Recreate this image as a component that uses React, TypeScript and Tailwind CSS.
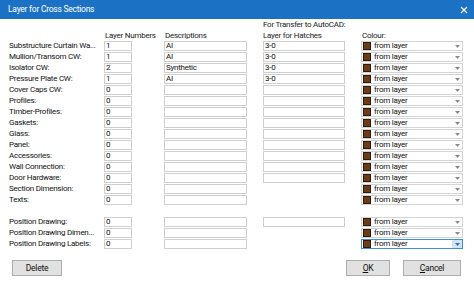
import React from "react";

type Row = {
  label: string;
  num: string;
  desc?: string;
  hatch?: string | null;
};

const rows: Row[] = [
  { label: "Substructure Curtain Wa...", num: "1", desc: "AI", hatch: "3-0" },
  { label: "Mullion/Transom CW:", num: "1", desc: "AI", hatch: "3-0" },
  { label: "Isolator CW:", num: "2", desc: "Synthetic", hatch: "3-0" },
  { label: "Pressure Plate CW:", num: "1", desc: "AI", hatch: "3-0" },
  { label: "Cover Caps CW:", num: "0", hatch: "" },
  { label: "Profiles:", num: "0", hatch: "" },
  { label: "Timber-Profiles:", num: "0", hatch: "" },
  { label: "Gaskets:", num: "0", hatch: "" },
  { label: "Glass:", num: "0", hatch: "" },
  { label: "Panel:", num: "0", hatch: "" },
  { label: "Accessories:", num: "0", hatch: "" },
  { label: "Wall Connection:", num: "0", hatch: "" },
  { label: "Door Hardware:", num: "0", hatch: "" },
  { label: "Section Dimension:", num: "0", hatch: null },
  { label: "Texts:", num: "0", hatch: null },
];

const posRows: Row[] = [
  { label: "Position Drawing:", num: "0", hatch: "" },
  { label: "Position Drawing Dimen...", num: "0", hatch: null },
  { label: "Position Drawing Labels:", num: "0", hatch: null },
];

function Box({ w, value }: { w: string; value?: string }) {
  return (
    <div
      className={`${w} h-[10px] border border-[#cfcfcf] bg-white pl-[1px] leading-[8px] text-[#111] overflow-hidden whitespace-nowrap`}
    >
      {value}
    </div>
  );
}

function ColourSelect({ focused }: { focused?: boolean }) {
  return (
    <div
      className={`ml-[16px] w-[102px] h-[10px] flex items-center border bg-white ${
        focused ? "border-[#3d8ee0]" : "border-[#d4d4d4]"
      }`}
    >
      <div className="ml-[1px] w-[8px] h-[8px] bg-[#6e3b17] border border-[#2e1a0a]" />
      <span className="ml-[3px] flex-1 leading-[8px] text-[#111]">from layer</span>
      <div
        className={`h-full w-[10px] flex items-center justify-center ${
          focused ? "bg-[#cfe4f8]" : ""
        }`}
      >
        <svg width="5" height="3" viewBox="0 0 5 3">
          <path d="M0 0 L5 0 L2.5 3 Z" fill={focused ? "#3f6f9f" : "#8a8a8a"} />
        </svg>
      </div>
    </div>
  );
}

function LayerRow({ row, focused }: { row: Row; focused?: boolean }) {
  return (
    <div className="flex h-[11px] items-start pl-[9px]">
      <div className="w-[95px] leading-[10px] whitespace-nowrap text-[#111]">
        {row.label}
      </div>
      <Box w="w-[28px]" value={row.num} />
      <div className="ml-[32px]">
        <Box w="w-[83px]" value={row.desc} />
      </div>
      <div className="ml-[16px] w-[82px]">
        {row.hatch !== null && row.hatch !== undefined && <Box w="w-[82px]" value={row.hatch} />}
      </div>
      <ColourSelect focused={focused} />
    </div>
  );
}

function Btn({ children, w }: { children: React.ReactNode; w: string }) {
  return (
    <div
      className={`${w} h-[16px] flex items-center justify-center border border-[#adadad] bg-[#e1e1e1] text-[#111]`}
    >
      {children}
    </div>
  );
}

export default function App() {
  return (
    <div
      className="w-[474px] h-[283px] bg-white overflow-hidden text-[8px] tracking-[-0.25px]"
      style={{ fontFamily: "Roboto, 'Noto Sans', sans-serif" }}
    >
      <div className="h-[19px] bg-[#1b72c5] flex items-center justify-between pl-[8px] pr-[6px] text-white">
        <span className="text-[8.5px]">Layer for Cross Sections</span>
        <svg width="8" height="8" viewBox="0 0 8 8">
          <path d="M1 1 L7 7 M7 1 L1 7" stroke="white" strokeWidth="1.2" />
        </svg>
      </div>

      <div className="flex h-[11px] items-center pl-[263px] pt-[1px] text-[#222]">
        For Transfer to AutoCAD:
      </div>
      <div className="flex h-[11px] items-center text-[#222]">
        <div className="ml-[105px] w-[59px]">Layer Numbers</div>
        <div className="ml-[1px] w-[98px]">Descriptions</div>
        <div className="w-[99px]">Layer for Hatches</div>
        <div>Colour:</div>
      </div>

      <div>
        {rows.map((r) => (
          <LayerRow key={r.label} row={r} />
        ))}
      </div>
      <div className="h-[11px]" />
      <div>
        {posRows.map((r, i) => (
          <LayerRow key={r.label} row={r} focused={i === posRows.length - 1} />
        ))}
      </div>

      <div className="flex mt-[10px] text-[8.5px]">
        <div className="ml-[12px]">
          <Btn w="w-[50px]">Delete</Btn>
        </div>
        <div className="ml-[284px]">
          <Btn w="w-[44px]">
            <span>
              <span className="underline">O</span>K
            </span>
          </Btn>
        </div>
        <div className="ml-[13px]">
          <Btn w="w-[58px]">
            <span>
              <span className="underline">C</span>ancel
            </span>
          </Btn>
        </div>
      </div>
    </div>
  );
}
